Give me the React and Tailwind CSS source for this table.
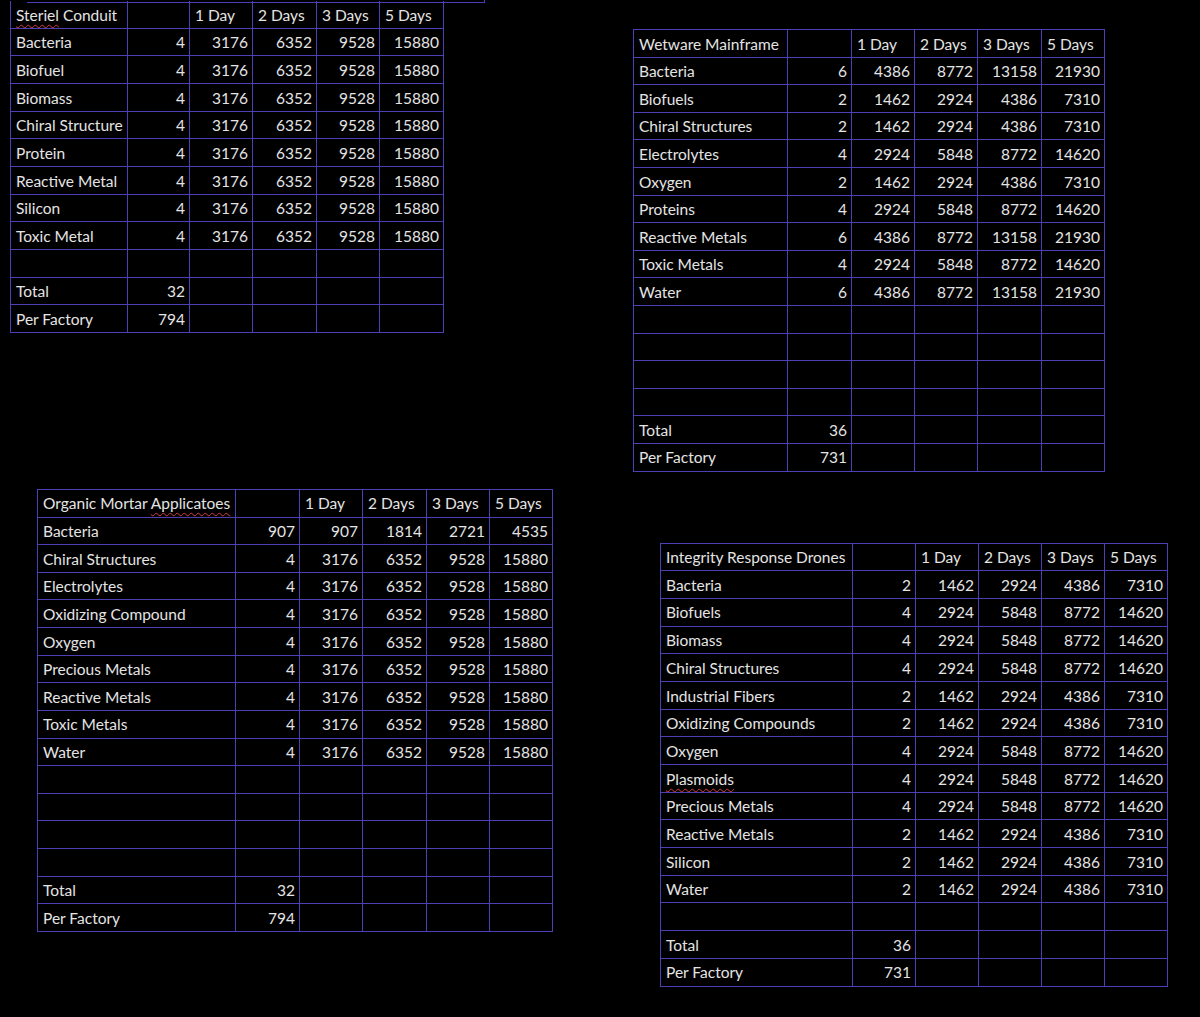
import React from 'react';

// values per unit count, same as the sheet
const wet = {
  2: [1462, 2924, 4386, 7310],
  4: [2924, 5848, 8772, 14620],
  6: [4386, 8772, 13158, 21930],
};
const conduit = [3176, 6352, 9528, 15880];

const steriel = ['Bacteria', 'Biofuel', 'Biomass', 'Chiral Structure', 'Protein', 'Reactive Metal', 'Silicon', 'Toxic Metal'].map((n) => [n, 4, ...conduit]);

const wetware = [
  ['Bacteria', 6], ['Biofuels', 2], ['Chiral Structures', 2], ['Electrolytes', 4], ['Oxygen', 2],
  ['Proteins', 4], ['Reactive Metals', 6], ['Toxic Metals', 4], ['Water', 6],
].map(([n, c]) => [n, c, ...wet[c]]);

const mortar = [
  ['Bacteria', 907, 907, 1814, 2721, 4535],
  ...['Chiral Structures', 'Electrolytes', 'Oxidizing Compound', 'Oxygen', 'Precious Metals', 'Reactive Metals', 'Toxic Metals', 'Water'].map((n) => [n, 4, ...conduit]),
];

const drones = [
  ['Bacteria', 2], ['Biofuels', 4], ['Biomass', 4], ['Chiral Structures', 4], ['Industrial Fibers', 2],
  ['Oxidizing Compounds', 2], ['Oxygen', 4], ['Plasmoids', 4], ['Precious Metals', 4], ['Reactive Metals', 2],
  ['Silicon', 2], ['Water', 2],
].map(([n, c]) => [n, c, ...wet[c]]);

const squiggle = 'underline decoration-wavy decoration-[#d83a3a] decoration-1 underline-offset-[3px]';

// render a name; some words carry the spell check underline
function Label({ text, typo }) {
  if (!typo) return <span>{text}</span>;
  const i = text.indexOf(typo);
  return (
    <span>
      {text.slice(0, i)}
      <span className={squiggle}>{typo}</span>
      {text.slice(i + typo.length)}
    </span>
  );
}

function Cell({ children, right }) {
  return (
    <div className={`border-r border-b border-[#4c40b4] pl-[5px] pr-[4px] pt-[2px] flex items-center whitespace-nowrap overflow-hidden ${right ? 'justify-end' : ''}`}>
      {children}
    </div>
  );
}

function Sheet({ cols, rowH, title, rows, blanks, total, perFactory, typos = {}, className = '' }) {
  const body = [];
  body.push(
    <React.Fragment key="h">
      <Cell><Label text={title} typo={typos[title]} /></Cell>
      <Cell />
      <Cell>1 Day</Cell>
      <Cell>2 Days</Cell>
      <Cell>3 Days</Cell>
      <Cell>5 Days</Cell>
    </React.Fragment>
  );
  rows.forEach((r, i) => {
    body.push(
      <React.Fragment key={'r' + i}>
        <Cell><Label text={r[0]} typo={typos[r[0]]} /></Cell>
        {r.slice(1).map((v, j) => (
          <Cell key={j} right>{v}</Cell>
        ))}
      </React.Fragment>
    );
  });
  for (let b = 0; b < blanks; b++) {
    body.push(
      <React.Fragment key={'b' + b}>
        {[0, 1, 2, 3, 4, 5].map((k) => <Cell key={k} />)}
      </React.Fragment>
    );
  }
  body.push(
    <React.Fragment key="t">
      <Cell>Total</Cell>
      <Cell right>{total}</Cell>
      <Cell /><Cell /><Cell /><Cell />
    </React.Fragment>
  );
  body.push(
    <React.Fragment key="p">
      <Cell>Per Factory</Cell>
      <Cell right>{perFactory}</Cell>
      <Cell /><Cell /><Cell /><Cell />
    </React.Fragment>
  );

  return (
    <div className={`grid border-l border-[#4c40b4] ${cols} ${rowH} w-fit ${className}`}>
      {body}
    </div>
  );
}

export default function App() {
  return (
    <div className="relative min-h-screen w-full overflow-hidden bg-black text-[#e4e4e4] text-[15.5px] leading-none" style={{ fontFamily: 'Lato, "Liberation Sans", sans-serif' }}>
      {/* edge of a box scrolled off above the first sheet */}
      <div className="absolute left-[27px] top-[-10px] w-[458px] h-[13px] border-b border-r border-[#4c40b4]" />

      <div className="flex">
        <div className="flex flex-col w-[633px] shrink-0">
          <Sheet
            className="ml-[10px] mt-[1px]"
            cols="grid-cols-[117px_62px_63px_64px_63px_64px]"
            rowH="auto-rows-[27.67px]"
            title="Steriel Conduit"
            typos={{ 'Steriel Conduit': 'Steriel' }}
            rows={steriel}
            blanks={1}
            total={32}
            perFactory={794}
          />
          <Sheet
            className="ml-[37px] mt-[156px] border-t"
            cols="grid-cols-[198px_64px_63px_64px_63px_63px]"
            rowH="auto-rows-[27.63px]"
            title="Organic Mortar Applicatoes"
            typos={{ 'Organic Mortar Applicatoes': 'Applicatoes' }}
            rows={mortar}
            blanks={4}
            total={32}
            perFactory={794}
          />
        </div>

        <div className="flex flex-col">
          <Sheet
            className="mt-[29px] border-t"
            cols="grid-cols-[154px_64px_63px_63px_64px_63px]"
            rowH="auto-rows-[27.6px]"
            title="Wetware Mainframe"
            rows={wetware}
            blanks={4}
            total={36}
            perFactory={731}
          />
          <Sheet
            className="ml-[27px] mt-[71px] border-t"
            cols="grid-cols-[192px_63px_63px_63px_63px_63px]"
            rowH="auto-rows-[27.7px]"
            title="Integrity Response Drones"
            typos={{ Plasmoids: 'Plasmoids' }}
            rows={drones}
            blanks={1}
            total={36}
            perFactory={731}
          />
        </div>
      </div>
    </div>
  );
}
